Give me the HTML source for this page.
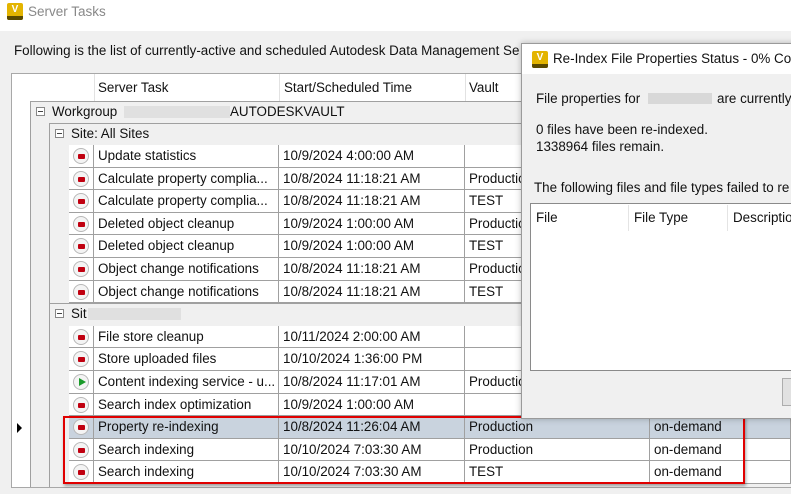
<!DOCTYPE html>
<html><head><meta charset="utf-8"><style>
*{margin:0;padding:0;box-sizing:border-box}
body{width:791px;height:494px;overflow:hidden;background:#f0f0f0;font-family:"Liberation Sans",sans-serif;font-size:13.4px;color:#111;position:relative}
.a{position:absolute;white-space:nowrap}
.cell{position:absolute;background:#fff;border-right:1px solid #a0a0a0;border-bottom:1px solid #a0a0a0;padding:3px 0 0 4px;overflow:hidden;white-space:nowrap}
.ic{position:absolute;width:16px;height:16px;border-radius:50%;background:#f4f4f4;border:1px solid #b8b8b8}
.ic i{position:absolute;left:4px;top:5px;width:7px;height:5px;background:#c00010;border-radius:1px}
.pl{position:absolute;left:5px;top:3px;width:0;height:0;border-left:7px solid #1a9a2a;border-top:4px solid transparent;border-bottom:4px solid transparent}
.exp{position:absolute;width:9px;height:9px;border:1px solid #888;background:#fff}
.exp:after{content:"";position:absolute;left:1px;top:3px;width:5px;height:1px;background:#444}
.sel{background:#c9d3de}
.logo{position:absolute;width:16px;height:17px;background:#e3b400;border-radius:2px;color:#fff;font-size:10px;font-weight:bold;text-align:center;line-height:13px}
.logo:after{content:"";position:absolute;left:0;bottom:0;width:16px;height:4px;background:#5a4a00;border-radius:0 0 2px 2px}
</style></head><body>
<div class="a" style="left:0;top:0;width:791px;height:31px;background:#fff"></div>
<div class="logo" style="left:7px;top:3px">V</div>
<div class="a" style="left:28px;top:4px;font-size:13.5px;color:#888">Server Tasks</div>
<div class="a" style="left:14px;top:43px">Following is the list of currently-active and scheduled Autodesk Data Management Se</div>

<div class="a" style="left:11px;top:73px;width:790px;height:415px;background:#fff;border:1px solid #a8a8a8"></div>
<div class="a" style="left:30px;top:74px;width:770px;height:27px;background:#fff"></div>
<div class="a" style="left:94px;top:74px;height:27px;border-left:1px solid #e2e2e2"></div>
<div class="a" style="left:279px;top:74px;height:27px;border-left:1px solid #e2e2e2"></div>
<div class="a" style="left:465px;top:74px;height:27px;border-left:1px solid #e2e2e2"></div>
<div class="a" style="left:650px;top:74px;height:27px;border-left:1px solid #e2e2e2"></div>
<div class="a" style="left:98px;top:80px">Server Task</div>
<div class="a" style="left:284px;top:80px">Start/Scheduled Time</div>
<div class="a" style="left:469px;top:80px">Vault</div>

<div class="a" style="left:30px;top:101px;width:770px;height:386px;background:#f0f0f0;border-top:1px solid #a0a0a0;border-left:1px solid #a0a0a0"></div>
<div class="exp" style="left:36px;top:107px"></div>
<div class="a" style="left:52px;top:104px">Workgroup</div>
<div class="a" style="left:124px;top:106px;width:106px;height:12px;background:#e0e0e0"></div>
<div class="a" style="left:230px;top:104px">AUTODESKVAULT</div>

<div class="a" style="left:49px;top:123px;width:752px;height:181px;border-top:1px solid #a0a0a0;border-left:1px solid #a0a0a0"></div>
<div class="exp" style="left:55px;top:129px"></div>
<div class="a" style="left:71px;top:126px">Site: All Sites</div>
<div class="a" style="left:49px;top:303px;width:752px;height:184px;border-top:1px solid #a0a0a0;border-left:1px solid #a0a0a0"></div>
<div class="exp" style="left:55px;top:309px"></div>
<div class="a" style="left:71px;top:306px">Sit</div>
<div class="a" style="left:88px;top:308px;width:93px;height:12px;background:#e0e0e0"></div>

<div id="rows"></div>
<script>
var R=[
[145,"Update statistics","10/9/2024 4:00:00 AM","",0],
[167.6,"Calculate property complia...","10/8/2024 11:18:21 AM","Production",0],
[190.2,"Calculate property complia...","10/8/2024 11:18:21 AM","TEST",0],
[212.8,"Deleted object cleanup","10/9/2024 1:00:00 AM","Production",0],
[235.4,"Deleted object cleanup","10/9/2024 1:00:00 AM","TEST",0],
[258,"Object change notifications","10/8/2024 11:18:21 AM","Production",0],
[280.6,"Object change notifications","10/8/2024 11:18:21 AM","TEST",0],
[325.8,"File store cleanup","10/11/2024 2:00:00 AM","",0],
[348.4,"Store uploaded files","10/10/2024 1:36:00 PM","",0],
[371,"Content indexing service - u...","10/8/2024 11:17:01 AM","Production",1],
[393.6,"Search index optimization","10/9/2024 1:00:00 AM","",0],
[416.2,"Property re-indexing","10/8/2024 11:26:04 AM","Production",2],
[438.8,"Search indexing","10/10/2024 7:03:30 AM","Production",3],
[461.4,"Search indexing","10/10/2024 7:03:30 AM","TEST",3]];
var h="";
R.forEach(function(r){var t=Math.round(r[0]),hh=Math.round(r[0]+22.6)-t,s=r[4]==2?" sel":"";
var st=r[4]>=2?"on-demand":"";
var g='top:'+t+'px;height:'+hh+'px;';
h+='<div class="cell'+s+'" style="left:69px;'+g+'width:25px"><div class="ic" style="left:4px;top:3px">'+(r[4]==1?'<span class="pl"></span>':'<i></i>')+'</div></div>';
h+='<div class="cell'+s+'" style="left:94px;'+g+'width:185px">'+r[1]+'</div>';
h+='<div class="cell'+s+'" style="left:279px;'+g+'width:186px">'+r[2]+'</div>';
h+='<div class="cell'+s+'" style="left:465px;'+g+'width:185px">'+r[3]+'</div>';
h+='<div class="cell'+s+'" style="left:650px;'+g+'width:141px">'+st+'</div>';});
document.getElementById("rows").innerHTML=h;
</script>
<div class="a" style="left:17px;top:423px;width:0;height:0;border-left:5px solid #000;border-top:5px solid transparent;border-bottom:5px solid transparent"></div>
<div class="a" style="left:63px;top:416px;width:682px;height:68px;border:2px solid #e00000;box-shadow:1px 2px 3px rgba(0,0,0,.35)"></div>

<div class="a" style="left:521px;top:43px;width:280px;height:376px;background:#f0f0f0;border:1px solid #9a9a9a;box-shadow:0 0 6px rgba(0,0,0,.25)"></div>
<div class="a" style="left:522px;top:44px;width:280px;height:30px;background:#fff"></div>
<div class="logo" style="left:532px;top:51px">V</div>
<div class="a" style="left:553px;top:51px;font-size:13.4px">Re-Index File Properties Status - 0% Con</div>
<div class="a" style="left:536px;top:91px">File properties for</div>
<div class="a" style="left:648px;top:93px;width:64px;height:11px;background:#d8d8d8"></div>
<div class="a" style="left:717px;top:91px">are currently</div>
<div class="a" style="left:536px;top:122px">0 files have been re-indexed.</div>
<div class="a" style="left:536px;top:139px">1338964 files remain.</div>
<div class="a" style="left:534px;top:180px">The following files and file types failed to re</div>
<div class="a" style="left:530px;top:203px;width:270px;height:168px;background:#fff;border:1px solid #8a8a8a"></div>
<div class="a" style="left:536px;top:210px">File</div>
<div class="a" style="left:628px;top:205px;height:26px;border-left:1px solid #e4e4e4"></div>
<div class="a" style="left:634px;top:210px">File Type</div>
<div class="a" style="left:727px;top:205px;height:26px;border-left:1px solid #e4e4e4"></div>
<div class="a" style="left:733px;top:210px">Description</div>
<div class="a" style="left:782px;top:378px;width:20px;height:28px;background:#e1e1e1;border:1px solid #adadad"></div>
</body></html>
